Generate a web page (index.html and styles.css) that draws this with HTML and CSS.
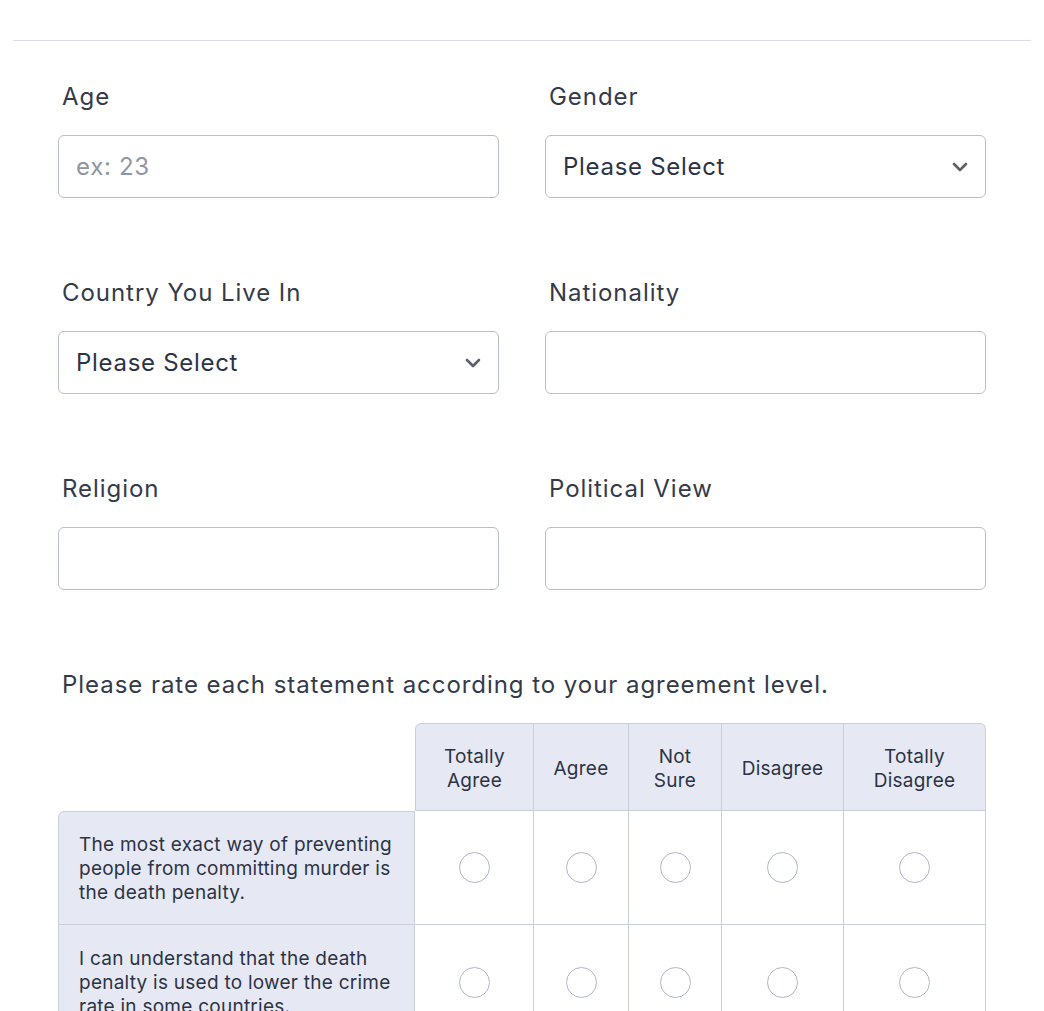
FILE: index.html
```html
<!DOCTYPE html>
<html lang="en">
<head>
<meta charset="utf-8">
<title>Survey</title>
<link rel="stylesheet" href="styles.css">
</head>
<body>
<div class="divider"></div>
<form class="form">
  <div class="grid">
    <div class="field">
      <label class="label" for="age">Age</label>
      <input class="control" id="age" type="text" placeholder="ex: 23">
    </div>
    <div class="field">
      <label class="label">Gender</label>
      <div class="control select"><span>Please Select</span>
        <svg class="chev" width="16" height="10" viewBox="0 0 16 10"><path d="M2 2 L8 8 L14 2" fill="none" stroke="#5b606e" stroke-width="2.6" stroke-linecap="round" stroke-linejoin="round"/></svg>
      </div>
    </div>
    <div class="field">
      <label class="label">Country You Live In</label>
      <div class="control select"><span>Please Select</span>
        <svg class="chev" width="16" height="10" viewBox="0 0 16 10"><path d="M2 2 L8 8 L14 2" fill="none" stroke="#5b606e" stroke-width="2.6" stroke-linecap="round" stroke-linejoin="round"/></svg>
      </div>
    </div>
    <div class="field">
      <label class="label">Nationality</label>
      <input class="control" type="text">
    </div>
    <div class="field">
      <label class="label">Religion</label>
      <input class="control" type="text">
    </div>
    <div class="field">
      <label class="label">Political View</label>
      <input class="control" type="text">
    </div>
  </div>

  <div class="field">
    <div class="label">Please rate each statement according to your agreement level.</div>
    <table class="matrix">
      <colgroup>
        <col style="width:357px"><col style="width:119px"><col style="width:95px"><col style="width:93px"><col style="width:122px"><col style="width:142px">
      </colgroup>
      <thead>
        <tr>
          <th class="blank"></th>
          <th class="head first">Totally<br>Agree</th>
          <th class="head">Agree</th>
          <th class="head">Not<br>Sure</th>
          <th class="head">Disagree</th>
          <th class="head last">Totally<br>Disagree</th>
        </tr>
      </thead>
      <tbody>
        <tr>
          <th class="rowhead top">The most exact way of preventing people from committing murder is the death penalty.</th>
          <td><input class="radio" type="radio" name="q1"></td>
          <td><input class="radio" type="radio" name="q1"></td>
          <td><input class="radio" type="radio" name="q1"></td>
          <td><input class="radio" type="radio" name="q1"></td>
          <td><input class="radio" type="radio" name="q1"></td>
        </tr>
        <tr>
          <th class="rowhead">I can understand that the death penalty is used to lower the crime rate in some countries.</th>
          <td><input class="radio" type="radio" name="q2"></td>
          <td><input class="radio" type="radio" name="q2"></td>
          <td><input class="radio" type="radio" name="q2"></td>
          <td><input class="radio" type="radio" name="q2"></td>
          <td><input class="radio" type="radio" name="q2"></td>
        </tr>
        <tr>
          <th class="rowhead">Crimes should be punished in proportion to their severity.</th>
          <td><input class="radio" type="radio" name="q3"></td>
          <td><input class="radio" type="radio" name="q3"></td>
          <td><input class="radio" type="radio" name="q3"></td>
          <td><input class="radio" type="radio" name="q3"></td>
          <td><input class="radio" type="radio" name="q3"></td>
        </tr>
      </tbody>
    </table>
  </div>
</form>
</body>
</html>
```

FILE: styles.css
```css
html, body {
  margin: 0;
  padding: 0;
  background: #ffffff;
}

body {
  font-family: Inter, "Noto Sans", sans-serif;
  color: #2c3345;
}

.divider {
  margin: 40px 13px 0;
  height: 0;
  border-top: 1px solid #d8dae5;
}

.form {
  padding: 41px 58px 40px;
}

.grid {
  display: grid;
  grid-template-columns: 441px 441px;
  column-gap: 46px;
}

.field {
  display: flex;
  flex-direction: column;
  gap: 23px;
  margin-bottom: 80px;
}

.label {
  font-size: 24px;
  line-height: 30px;
  padding-left: 4px;
  letter-spacing: 0.95px;
  color: #343a4a;
  font-weight: 400;
}

.control {
  box-sizing: border-box;
  height: 63px;
  width: 100%;
  margin: 0;
  border: 1px solid #b8bdc9;
  border-radius: 6px;
  background: #fff;
  padding: 0 17px;
  font-family: inherit;
  font-size: 24px;
  letter-spacing: 0.7px;
  color: #2c3345;
  outline: none;
}

.control::placeholder {
  color: #8f96a3;
}

.select {
  display: flex;
  align-items: center;
  justify-content: space-between;
  padding-right: 17px;
}

.chev {
  display: block;
}

.matrix {
  width: 928px;
  table-layout: fixed;
  border-collapse: separate;
  border-spacing: 0;
  font-size: 19px;
  line-height: 24px;
  letter-spacing: 0.25px;
  color: #2c3345;
}

.matrix th, .matrix td {
  padding: 0;
  font-weight: 400;
}

.blank {
  border: none;
}

.head {
  height: 88px;
  background: #e6e9f4;
  border-top: 1px solid #c9cedb;
  border-right: 1px solid #c9cedb;
  border-bottom: 1px solid #c9cedb;
  text-align: center;
  vertical-align: middle;
  box-sizing: border-box;
  padding-top: 3px !important;
}

.head.first {
  border-left: 1px solid #c9cedb;
  border-top-left-radius: 6px;
}

.head.last {
  border-top-right-radius: 6px;
}

.rowhead {
  box-sizing: border-box;
  background: #e6e9f4;
  border-left: 1px solid #c9cedb;
  border-right: 1px solid #c9cedb;
  border-bottom: 1px solid #c9cedb;
  text-align: left;
  padding: 22px 20px 20px 20px !important;
  height: 114px;
}

.rowhead.top {
  border-top: 1px solid #c9cedb;
  border-top-left-radius: 6px;
  padding-top: 21px !important;
  padding-bottom: 19px !important;
  height: 112px;
}

.matrix td {
  text-align: center;
  vertical-align: middle;
  border-right: 1px solid #c9cedb;
  border-bottom: 1px solid #c9cedb;
  background: #fff;
}

.radio {
  appearance: none;
  -webkit-appearance: none;
  display: block;
  margin: 0 auto;
  width: 31px;
  height: 31px;
  box-sizing: border-box;
  border: 1.5px solid #b1b7c6;
  border-radius: 50%;
  background: #fff;
}
```
